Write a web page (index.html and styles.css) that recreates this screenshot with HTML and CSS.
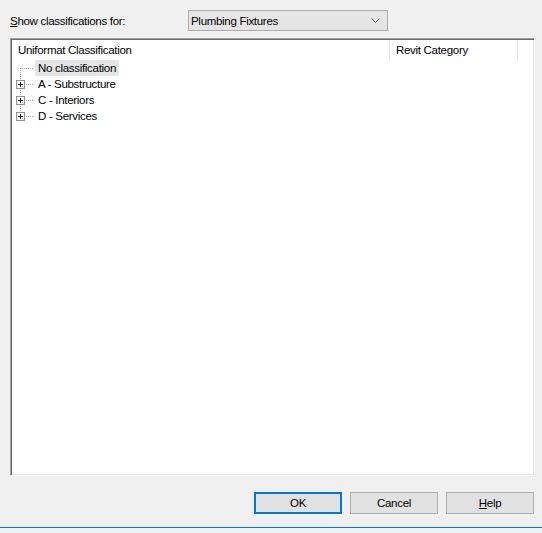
FILE: index.html
```html
<!DOCTYPE html>
<html>
<head>
<meta charset="utf-8">
<link rel="stylesheet" href="styles.css">
</head>
<body>
<div class="dialog">
  <div class="top">
    <label class="top-label"><u>S</u>how classifications for:</label>
    <div class="combo">
      <span class="combo-text">Plumbing Fixtures</span>
      <svg class="chev" width="10" height="6" viewBox="0 0 10 6"><path d="M0.5 0.5 L4.5 4.5 L8.5 0.5" fill="none" stroke="#555" stroke-width="1"/></svg>
    </div>
  </div>
  <div class="listbox">
    <div class="header">
      <div class="col col1">Uniformat Classification</div>
      <div class="col col2">Revit Category</div>
    </div>
    <div class="tree">
      <div class="row first">
        <div class="gutter"></div>
        <span class="label selected">No classification</span>
      </div>
      <div class="row mid">
        <div class="gutter"><span class="plus"></span></div>
        <span class="label">A - Substructure</span>
      </div>
      <div class="row mid">
        <div class="gutter"><span class="plus"></span></div>
        <span class="label">C - Interiors</span>
      </div>
      <div class="row last">
        <div class="gutter"><span class="plus"></span></div>
        <span class="label">D - Services</span>
      </div>
    </div>
  </div>
  <div class="buttons">
    <button class="btn default">OK</button>
    <button class="btn">Cancel</button>
    <button class="btn"><u>H</u>elp</button>
  </div>
  <div class="edge"></div>
</div>
</body>
</html>
```
FILE: styles.css
```css
html, body {
  margin: 0;
  padding: 0;
  background: #f0f0f0;
}
body {
  font-family: "Liberation Sans", Arial, sans-serif;
  font-size: 11.5px;
  letter-spacing: -0.3px;
  color: #000;
}
.dialog {
  width: 542px;
  height: 533px;
  display: flex;
  flex-direction: column;
}
.top {
  display: flex;
  align-items: center;
  padding: 10px 0 0 10px;
  height: 21px;
}
.top-label {
  width: 178px;
}
.combo {
  box-sizing: border-box;
  width: 200px;
  height: 21px;
  background: #e5e5e5;
  border: 1px solid #adadad;
  display: flex;
  align-items: center;
  justify-content: space-between;
  padding: 0 6px 0 2px;
}
.chev {
  display: block;
  margin-top: 1px;
}
.listbox {
  box-sizing: border-box;
  margin: 7px 0 0 10px;
  width: 525px;
  height: 438px;
  background: #fff;
  border-style: solid;
  border-width: 1px;
  border-color: #a0a0a0 #ffffff #ffffff #a0a0a0;
  box-shadow: inset 1px 1px 0 #696969, inset -1px -1px 0 #e3e3e3;
  padding: 1px 0 0 1px;
  display: flex;
  flex-direction: column;
}
.header {
  display: flex;
  height: 20px;
  align-items: stretch;
}
.col {
  box-sizing: border-box;
  display: flex;
  align-items: center;
  border-right: 1px solid #e5e5e5;
}
.col1 {
  width: 378px;
  padding-left: 6px;
}
.col2 {
  width: 128px;
  padding-left: 6px;
}
.tree {
  display: flex;
  flex-direction: column;
}
.row {
  display: flex;
  align-items: center;
  height: 16px;
}
.gutter {
  position: relative;
  width: 23px;
  height: 16px;
  flex: none;
}
.gutter::before {
  content: "";
  position: absolute;
  left: 8px;
  width: 1px;
  background: repeating-linear-gradient(to bottom, #a0a0a0 0 1px, transparent 1px 2px);
}
.first .gutter::before { top: 8px; bottom: 0; }
.mid .gutter::before { top: 0; bottom: 0; }
.last .gutter::before { top: 0; height: 8px; }
.gutter::after {
  content: "";
  position: absolute;
  left: 9px;
  top: 8px;
  width: 13px;
  height: 1px;
  background: repeating-linear-gradient(to right, transparent 0 1px, #a0a0a0 1px 2px);
}
.plus {
  position: absolute;
  z-index: 1;
  box-sizing: border-box;
  left: 4px;
  top: 4px;
  width: 9px;
  height: 9px;
  border: 1px solid #919191;
  background:
    linear-gradient(#1e1e3c, #1e1e3c) center / 5px 1px no-repeat,
    linear-gradient(#1e1e3c, #1e1e3c) center / 1px 5px no-repeat,
    #fff;
}
.label {
  height: 16px;
  line-height: 16px;
  padding: 0 3px;
}
.selected {
  background: #e5e5e5;
}
.buttons {
  display: flex;
  justify-content: flex-end;
  gap: 8px;
  margin-top: 16px;
  padding-right: 8px;
  height: 22px;
}
.btn {
  box-sizing: border-box;
  width: 88px;
  height: 22px;
  font: inherit;
  letter-spacing: inherit;
  color: #000;
  background: #e1e1e1;
  border: 1px solid #adadad;
  padding: 0;
}
.btn.default {
  border: 2px solid #0078d7;
}
.edge {
  margin-top: 13px;
  height: 1px;
  background: #0078d7;
}
```
